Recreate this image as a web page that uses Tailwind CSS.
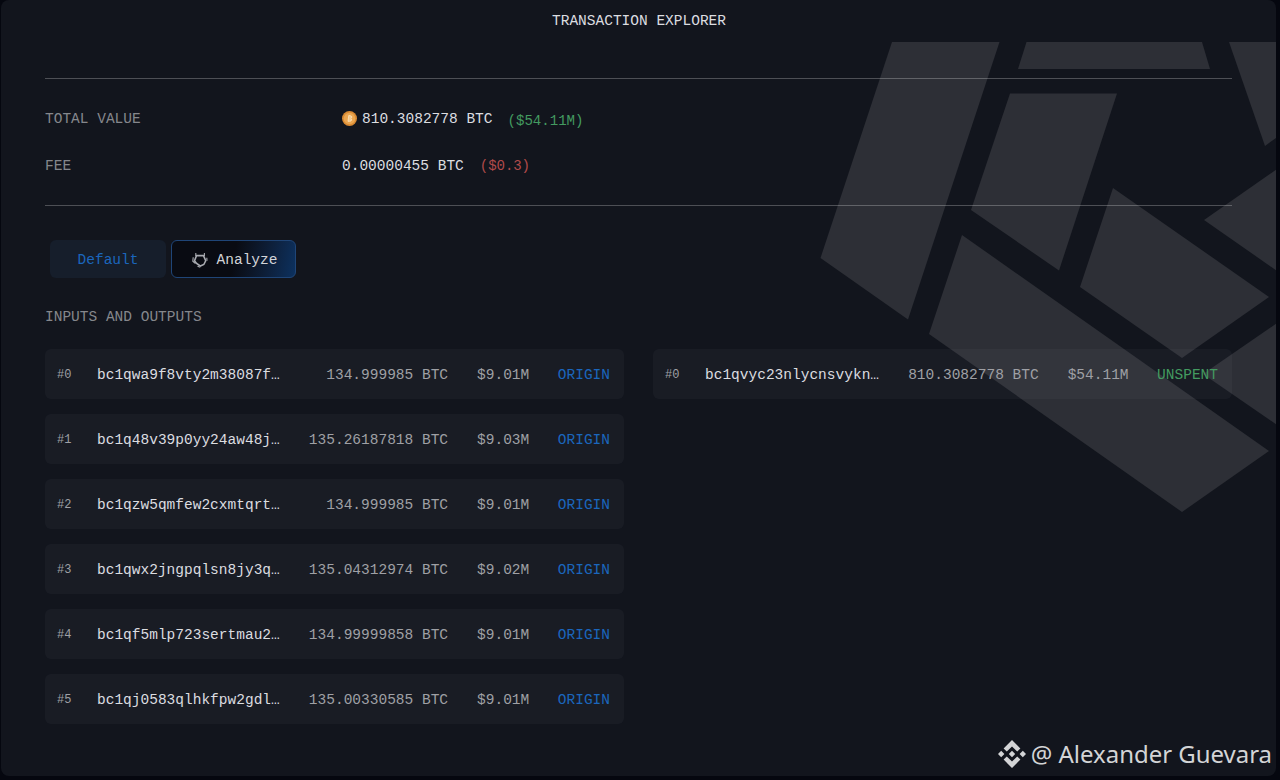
<!DOCTYPE html>
<html lang="en">
  <head>
    <meta charset="UTF-8" />
    <meta name="viewport" content="width=device-width, initial-scale=1.0" />
    <title>Transaction Explorer</title>
    <script src="https://cdn.jsdelivr.net/npm/@tailwindcss/browser@4"></script>
  </head>
  <body class="h-screen overflow-hidden bg-[#05070f] font-['Liberation_Mono',monospace] text-[14.5px] leading-5">
    <main class="relative ml-px h-[776px] w-[1275px] overflow-hidden rounded-lg bg-[#12151d]">
      <!-- Background logo -->
      <svg class="absolute top-0 -left-px fill-[#2d2f36]" width="1280" height="776" viewBox="0 0 1280 776">
        <polygon points="892,42 999.500,42 908,319.500 820.500,258" />
        <polygon points="1026.500,42 1202,42 1210,69 1018,69" />
        <polygon points="1229,42 1280,42 1280,135 1265,146" />
        <polygon points="1010,93.500 1117,93.500 1059,270.500 971,210" />
        <polygon points="1113,188 1269,297 1182,358 1080,287" />
        <polygon points="1204,220 1280,167 1280,273" />
        <polygon points="962,235 1269,451 1182,512 929,334" />
        <polygon points="1203,374 1280,321 1280,427" />
      </svg>

      <div class="relative px-11 pt-[11px]">
        <h1 class="pl-px text-center text-[#dcdde0]">TRANSACTION EXPLORER</h1>

        <!-- Summary -->
        <section class="mt-[47px] flex h-[128px] w-[1187px] flex-col gap-[25px] border-y border-white/25 pt-[30px]">
          <div class="flex">
            <span class="w-[297px] text-[#85878c]">TOTAL VALUE</span>
            <svg class="mt-[2px] mr-[5px] size-[15px]" viewBox="0 0 16 16">
              <circle cx="8" cy="8" r="8" fill="#d98a33" />
              <circle cx="8" cy="8" r="6.200" fill="#eba650" />
              <path d="M7.200 4.800 6.400 11h1.800c2.400 0 2.700-2.400 1.200-3 1.600-.7 1.300-3-.6-3z" fill="#f3c98c" stroke="#fbe6c4" stroke-width=".8" />
            </svg>
            <span class="text-[#dcdde0]">810.3082778 BTC</span>
            <span class="mt-0.5 ml-[15px] text-[14.1px] tracking-[-0.02px] text-[#439a60]">($54.11M)</span>
          </div>
          <div class="-mt-[3px] flex">
            <span class="w-[297px] pt-[3px] text-[#85878c]">FEE</span>
            <span class="pt-[3px] text-[#dcdde0]">0.00000455 BTC</span>
            <span class="ml-4 pt-[3px] text-[14.1px] tracking-[-0.1px] text-[#b04a4a]">($0.3)</span>
          </div>
        </section>

        <div class="mt-[34px] ml-[5px] flex gap-[5px]">
          <button class="h-[38px] w-[116px] rounded-md bg-[#161e2b] pt-0.5 text-[#1b66bd]">Default</button>
          <button class="flex h-[38px] w-[125px] items-center justify-center gap-[9px] rounded-md border border-[#1f4577] bg-linear-100 from-[#090b12] from-50% to-[#0c315f] pt-px pl-0.5 text-[#d2d4d8]">
            <svg class="size-4" viewBox="0 0 16 16" fill="none" stroke="#a9abb1" stroke-width="1.600">
              <path d="M4.500 3.600H11.500L13.700 8.800 11.800 12.500 8.300 14 4.600 11.500 2.500 8.800z" />
              <path d="M3.800 1v3M12.400 1v3M1.200 5.200 .8 9.200 3.500 11.500M14.800 5.800 15 8.800M5.500 14.300 8.300 15.300" stroke-width="1.100" />
            </svg>
            Analyze
          </button>
        </div>

        <h2 class="mt-[29px] text-[#85878c]">INPUTS AND OUTPUTS</h2>

        <div class="mt-[22px] flex w-[1187px] items-start gap-[29px]">
          <div id="inputs" class="flex flex-1 flex-col gap-[15.1px]"></div>
          <div id="outputs" class="flex flex-1 flex-col gap-[15.1px]"></div>
        </div>
      </div>
    </main>

    <!-- Author credit -->
    <div class="absolute right-[8px] bottom-3 flex items-center gap-[5px] font-['Noto_Sans',sans-serif] text-[24px] tracking-[-0.03px] text-[#d3d4d6]">
      <svg class="size-7" viewBox="0 0 28 28" fill="currentColor">
        <path d="M14 0 22.400 8.400 19.200 11.600 14 6.400 8.800 11.600 5.600 8.400zM14 28 5.600 19.600 8.800 16.400 14 21.600 19.200 16.400 22.400 19.600zM3.200 10.800 6.400 14 3.200 17.200 0 14zM24.800 10.800 28 14 24.800 17.200 21.600 14zM14 10.800 17.200 14 14 17.200 10.800 14z" />
      </svg>
      <span>@ Alexander Guevara</span>
    </div>

    <script>
      const inputs = [
        ["bc1qwa9f8vty2m38087f…", "134.999985 BTC", "$9.01M"],
        ["bc1q48v39p0yy24aw48j…", "135.26187818 BTC", "$9.03M"],
        ["bc1qzw5qmfew2cxmtqrt…", "134.999985 BTC", "$9.01M"],
        ["bc1qwx2jngpqlsn8jy3q…", "135.04312974 BTC", "$9.02M"],
        ["bc1qf5mlp723sertmau2…", "134.99999858 BTC", "$9.01M"],
        ["bc1qj0583qlhkfpw2gdl…", "135.00330585 BTC", "$9.01M"],
      ];
      const outputs = [["bc1qvyc23nlycnsvykn…", "810.3082778 BTC", "$54.11M"]];

      function render(id, rows, label, color) {
        document.getElementById(id).innerHTML = rows
          .map(
            ([address, amount, usd], i) => `
          <div class="flex h-[50px] items-center rounded-md bg-[#c8d2e6]/4 pt-px pr-[14px] pl-3 text-[#9fa0a5]">
            <span class="w-10 text-xs">#${i}</span>
            <span class="text-[#dcdde0]">${address}</span>
            <span class="ml-auto">${amount}</span>
            <span class="ml-[29px]">${usd}</span>
            <span class="ml-[28.500px] ${color}">${label}</span>
          </div>`
          )
          .join("");
      }

      render("inputs", inputs, "ORIGIN", "text-[#1b66bd]");
      render("outputs", outputs, "UNSPENT", "text-[#439a60]");
    </script>
  </body>
</html>
